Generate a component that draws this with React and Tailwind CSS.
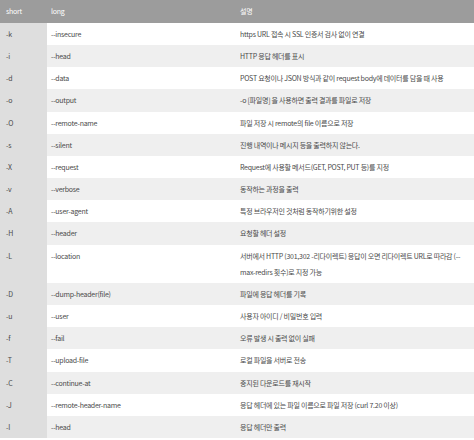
import React from 'react';

const rows = [
  ['-k', '--insecure', 'https URL 접속 시 SSL 인증서 검사 없이 연결'],
  ['-i', '--head', 'HTTP 응답 헤더를 표시'],
  ['-d', '--data', 'POST 요청이나 JSON 방식과 같이 request body에 데이터를 담을 때 사용'],
  ['-o', '--output', '-o [파일명] 을 사용하면 출력 결과를 파일로 저장'],
  ['-O', '--remote-name', '파일 저장 시 remote의 file 이름으로 저장'],
  ['-s', '--silent', '진행 내역이나 메시지 등을 출력하지 않는다.'],
  ['-X', '--request', 'Request에 사용할 메서드(GET, POST, PUT 등)를 지정'],
  ['-v', '--verbose', '동작하는 과정을 출력'],
  ['-A', '--user-agent', '특정 브라우저인 것처럼 동작하기위한 설정'],
  ['-H', '--header', '요청할 헤더 설정'],
  ['-L', '--location', '서버에서 HTTP (301,302 -리다이렉트) 응답이 오면 리다이렉트 URL로 따라감 (--max-redirs 횟수)로 지정 가능'],
  ['-D', '--dump-header(file)', '파일에 응답 헤더를 기록'],
  ['-u', '--user', '사용자 아이디 / 비밀번호 입력'],
  ['-f', '--fail', '오류 발생 시 출력 없이 실패'],
  ['-T', '--upload-file', '로컬 파일을 서버로 전송'],
  ['-C', '--continue-at', '중지된 다운로드를 재시작'],
  ['-J', '--remote-header-name', '응답 헤더에 있는 파일 이름으로 파일 저장 (curl 7.20 이상)'],
  ['-I', '--head', '응답 헤더만 출력'],
];

export default function App() {
  return (
    <div className="w-[474px] h-[440px] bg-white overflow-hidden text-[7px] tracking-[-0.25px] leading-[16.15px] text-[#4a4a4a]" style={{ fontFamily: '"Noto Sans CJK KR", "Noto Sans", sans-serif' }}>
      <div className="grid grid-cols-[47px_189px_1fr] bg-[#9c9c9c] text-white h-[23px] items-center">
        <div className="pl-[6px]">short</div>
        <div className="pl-[4px]">long</div>
        <div className="pl-[4px]">설명</div>
      </div>
      {rows.map((r, i) => (
        <div key={i} className={`grid grid-cols-[47px_189px_1fr] ${i % 2 ? 'bg-[#efefef]' : 'bg-white'}`}>
          <div className="bg-[#dedede] pl-[6px] py-[3px]">{r[0]}</div>
          <div className="pl-[4px] py-[3px]">{r[1]}</div>
          <div className="pl-[4px] pr-[12px] py-[3px]">{r[2]}</div>
        </div>
      ))}
    </div>
  );
}
